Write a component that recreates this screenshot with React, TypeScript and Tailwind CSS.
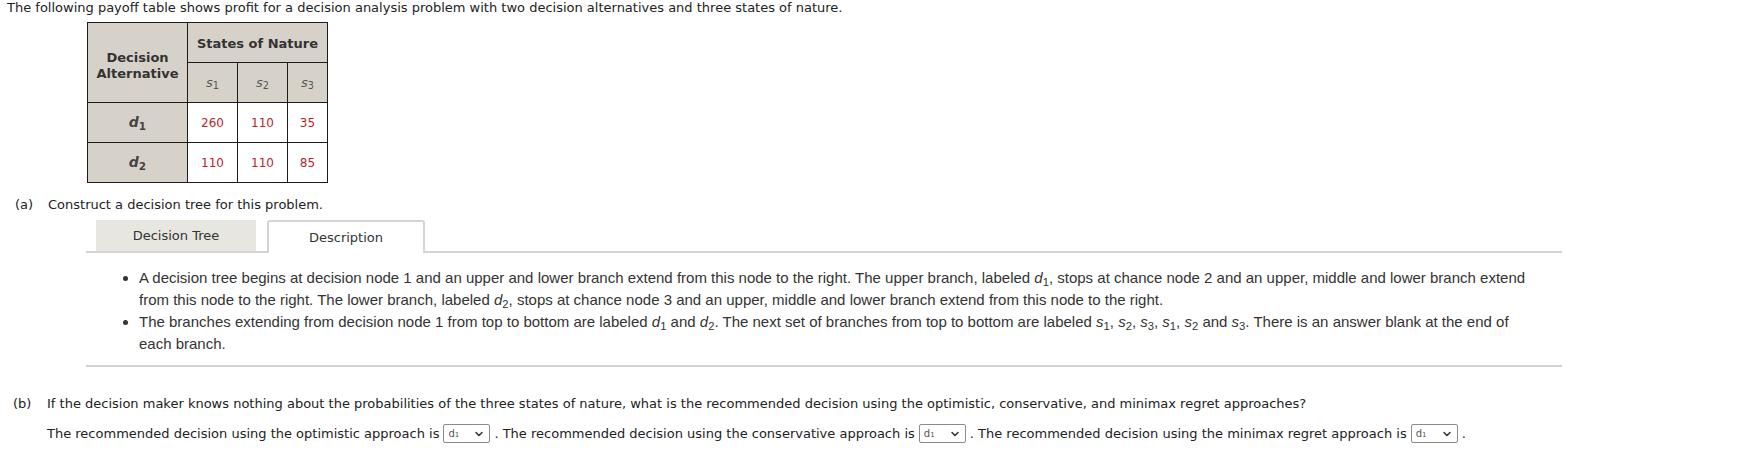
import { ChevronDown } from 'lucide-react';

const payoffs = [
  { label: '1', values: [260, 110, 35] },
  { label: '2', values: [110, 110, 85] },
];

function Sym({ v, n }: { v: string; n: string }) {
  return (
    <span>
      <i>{v}</i>
      <sub>{n}</sub>
    </span>
  );
}

function Pick() {
  return (
    <span className="inline-flex items-center justify-between align-middle w-[47px] h-[19px] mx-[4px] border border-[#8a8a8a] rounded-[2px] bg-white pl-[4px] pr-[4px] -mt-[2px]">
      <span className="text-[10px] text-[#555] leading-none">
        d<span className="text-[7px]">1</span>
      </span>
      <ChevronDown className="w-[12px] h-[12px] text-[#333]" strokeWidth={3} />
    </span>
  );
}

export default function App() {
  return (
    <div
      className="w-[1743px] h-[465px] bg-white text-[#222] text-[13px] overflow-hidden"
      style={{ fontFamily: '"DejaVu Sans", Verdana, sans-serif' }}
    >
      <p className="pl-[7px] pt-0 leading-[15px]">
        The following payoff table shows profit for a decision analysis problem with two decision
        alternatives and three states of nature.
      </p>

      <table className="ml-[87px] mt-[7px] border-collapse text-[13px] text-[#333]">
        <tbody>
          <tr className="h-[40px]">
            <th
              rowSpan={2}
              className="w-[100px] border border-[#1c1c1c] bg-[#d6d2ca] font-bold leading-[16px] pt-[6px]"
            >
              Decision
              <br />
              Alternative
            </th>
            <th colSpan={3} className="border border-[#1c1c1c] bg-[#d6d2ca] font-bold pt-[2px]">
              States of Nature
            </th>
          </tr>
          <tr className="h-[40px]">
            {['1', '2', '3'].map((n, i) => (
              <th
                key={n}
                className={`border border-[#1c1c1c] bg-[#d6d2ca] font-normal text-[#555] text-[13px] ${
                  i === 2 ? 'w-[40px]' : 'w-[50px]'
                }`}
              >
                <Sym v="s" n={n} />
              </th>
            ))}
          </tr>
          {payoffs.map((row) => (
            <tr key={row.label} className="h-[40px]">
              <td className="border border-[#1c1c1c] bg-[#d6d2ca] text-center font-bold text-[#444] text-[14px]">
                <Sym v="d" n={row.label} />
              </td>
              {row.values.map((v, i) => (
                <td
                  key={i}
                  className="border border-[#1c1c1c] bg-white text-center text-[#b8232c] text-[12px]"
                >
                  {v}
                </td>
              ))}
            </tr>
          ))}
        </tbody>
      </table>

      <div className="flex mt-[14px] pl-[15px] leading-[15px]">
        <span className="w-[33px]">(a)</span>
        <span>Construct a decision tree for this problem.</span>
      </div>

      <div className="ml-[86px] w-[1476px] mt-[8px]">
        <div className="flex items-end border-b-2 border-[#d4d4d0] h-[33px]">
          <div className="ml-[10px] w-[160px] h-[31px] bg-[#e8e6e1] flex items-center justify-center text-[13px] text-[#333]">
            Decision Tree
          </div>
          <div className="ml-[11px] w-[158px] h-[33px] -mb-[2px] bg-white border-2 border-b-0 border-[#d4d4d0] rounded-t-[3px] flex items-center justify-center text-[13px] text-[#333]">
            Description
          </div>
        </div>

        <ul
          className="pt-[14px] pb-[10px] pl-[53px] pr-[28px] text-[15px] text-[#333] leading-[22px] border-b-2 border-[#d4d4d0]"
          style={{ fontFamily: '"Liberation Sans", Arial, sans-serif' }}
        >
          <li className="list-disc">
            A decision tree begins at decision node 1 and an upper and lower branch extend from this
            node to the right. The upper branch, labeled <Sym v="d" n="1" />, stops at chance node 2
            and an upper, middle and lower branch extend from this node to the right. The lower
            branch, labeled <Sym v="d" n="2" />, stops at chance node 3 and an upper, middle and lower
            branch extend from this node to the right.
          </li>
          <li className="list-disc">
            The branches extending from decision node 1 from top to bottom are labeled{' '}
            <Sym v="d" n="1" /> and <Sym v="d" n="2" />. The next set of branches from top to bottom
            are labeled <Sym v="s" n="1" />, <Sym v="s" n="2" />, <Sym v="s" n="3" />,{' '}
            <Sym v="s" n="1" />, <Sym v="s" n="2" /> and <Sym v="s" n="3" />. There is an answer
            blank at the end of each branch.
          </li>
        </ul>
      </div>

      <div className="flex mt-[29px] pl-[13px] leading-[15px]">
        <span className="w-[34px]">(b)</span>
        <div>
          <p>
            If the decision maker knows nothing about the probabilities of the three states of
            nature, what is the recommended decision using the optimistic, conservative, and minimax
            regret approaches?
          </p>
          <p className="mt-[15px]">
            The recommended decision using the optimistic approach is
            <Pick />. The recommended decision using the conservative approach is
            <Pick />. The recommended decision using the minimax regret approach is
            <Pick />.
          </p>
        </div>
      </div>
    </div>
  );
}
